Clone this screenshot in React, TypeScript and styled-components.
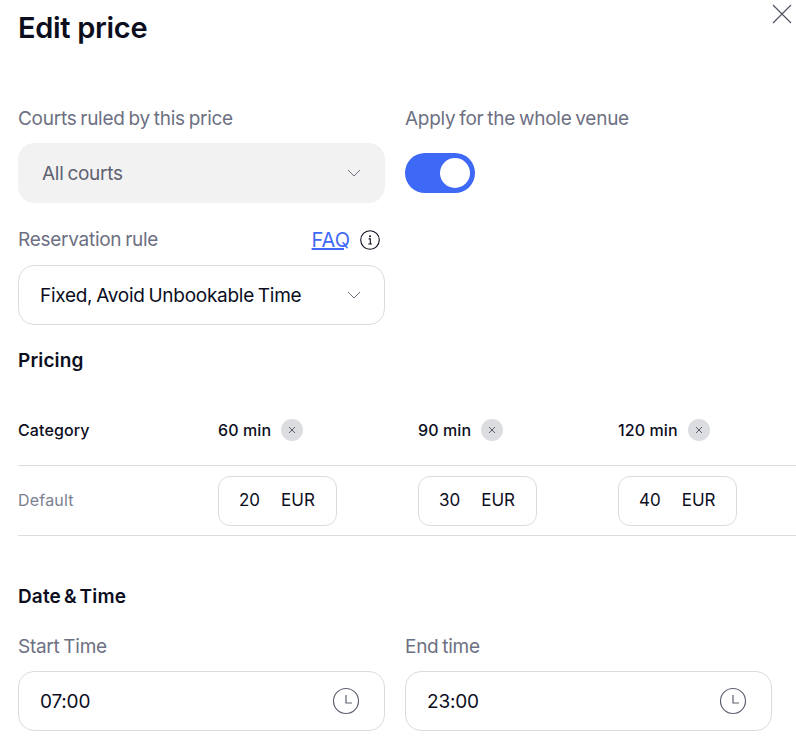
import type { FC } from 'react';
import styled, { createGlobalStyle } from 'styled-components';

const GlobalStyle = createGlobalStyle`
  html, body {
    margin: 0;
    padding: 0;
    background: #fff;
    overflow: hidden;
  }
  body {
    font-family: Inter, 'Liberation Sans', sans-serif;
    color: #0c0e1e;
  }
`;

const durations = [
  { label: '60 min', price: 20 },
  { label: '90 min', price: 30 },
  { label: '120 min', price: 40 },
];

const Chevron: FC = () => (
  <svg width='14' height='8' viewBox='0 0 14 8' fill='none'>
    <path d='M1 1l6 6 6-6' stroke='#6f7280' strokeWidth='1' />
  </svg>
);

const ClockIcon: FC = () => (
  <svg width='28' height='28' viewBox='0 0 28 28' fill='none'>
    <circle cx='14' cy='14' r='12.5' stroke='#5f6272' strokeWidth='1.2' />
    <path d='M14 8v8h6' stroke='#5f6272' strokeWidth='1.2' />
  </svg>
);

const App: FC = () => (
  <Page>
    <GlobalStyle />
    <CloseButton aria-label='Close'>
      <svg width='20' height='20' viewBox='0 0 20 20' fill='none'>
        <path d='M1 1l18 18M19 1L1 19' stroke='#4c4f5e' strokeWidth='1.1' />
      </svg>
    </CloseButton>
    <Title>Edit price</Title>

    <TwoColumns $top={61}>
      <Field>
        <Label>Courts ruled by this price</Label>
        <Select $disabled>
          All courts
          <Chevron />
        </Select>
      </Field>
      <Field>
        <Label>Apply for the whole venue</Label>
        <Toggle>
          <Knob />
        </Toggle>
      </Field>
    </TwoColumns>

    <TwoColumns $top={23}>
      <Field>
        <LabelRow>
          <Label>Reservation rule</Label>
          <FaqLink href='#faq'>FAQ</FaqLink>
          <svg width='20' height='20' viewBox='0 0 20 20' fill='none'>
            <circle cx='10' cy='10' r='9.3' stroke='#0c0e1e' strokeWidth='1.1' />
            <path d='M8.6 8.9h1.7v5M8.3 14h3.6' stroke='#0c0e1e' strokeWidth='1.1' />
            <circle cx='10' cy='6.2' r='1' fill='#0c0e1e' />
          </svg>
        </LabelRow>
        <Select>
          Fixed, Avoid Unbookable Time
          <Chevron />
        </Select>
      </Field>
    </TwoColumns>

    <SectionTitle $top={24}>Pricing</SectionTitle>

    <PriceHead>
      <HeadCell>Category</HeadCell>
      {durations.map(({ label }) => (
        <HeadCell key={label}>
          {label}
          <RemoveChip aria-label={`Remove ${label}`}>
            <svg width='8' height='8' viewBox='0 0 8 8' fill='none'>
              <path d='M1 1l6 6M7 1L1 7' stroke='#5a5d6c' strokeWidth='1' />
            </svg>
          </RemoveChip>
        </HeadCell>
      ))}
    </PriceHead>

    <PriceRow>
      <RowName>Default</RowName>
      {durations.map(({ label, price }) => (
        <div key={label}>
          <PriceBox>
            <span>{price}</span>
            <span>EUR</span>
          </PriceBox>
        </div>
      ))}
    </PriceRow>

    <SectionTitle $top={49}>Date &amp; Time</SectionTitle>

    <TwoColumns $top={25}>
      <Field>
        <Label>Start Time</Label>
        <TimeBox>
          07:00
          <ClockIcon />
        </TimeBox>
      </Field>
      <Field>
        <Label>End time</Label>
        <TimeBox>
          23:00
          <ClockIcon />
        </TimeBox>
      </Field>
    </TwoColumns>
  </Page>
);

export default App;

const Page = styled.div`
  position: relative;
  width: 796px;
  height: 741px;
  box-sizing: border-box;
  padding: 11px 0 0 18px;
  overflow: hidden;
`;

const CloseButton = styled.button`
  position: absolute;
  top: 4px;
  right: 4px;
  width: 20px;
  height: 20px;
  padding: 0;
  border: 0;
  background: none;
`;

const Title = styled.h1`
  margin: 0;
  font-size: 29px;
  line-height: 34px;
  font-weight: 600;
  letter-spacing: -0.3px;
`;

const TwoColumns = styled.div<{ $top: number }>`
  display: grid;
  grid-template-columns: 367px 367px;
  gap: 20px;
  margin-top: ${({ $top }) => $top}px;
`;

const Field = styled.div`
  display: flex;
  flex-direction: column;
  align-items: flex-start;
  gap: 12px;
`;

const Label = styled.label`
  display: block;
  font-size: 19px;
  line-height: 25px;
  color: #6d7082;
  letter-spacing: -0.27px;
  word-spacing: -1.2px;
`;

const LabelRow = styled.div`
  display: flex;
  align-items: center;
  width: 100%;
  height: 27px;
  gap: 10px;
  padding-right: 5px;
  box-sizing: border-box;
  & > label {
    margin-right: auto;
  }
`;

const FaqLink = styled.a`
  font-size: 20px;
  line-height: 26px;
  color: #3e68f6;
`;

const Select = styled.div<{ $disabled?: boolean }>`
  display: flex;
  align-items: center;
  justify-content: space-between;
  width: 100%;
  height: 60px;
  box-sizing: border-box;
  padding: 0 23px 0 ${({ $disabled }) => ($disabled ? 23 : 21)}px;
  border-radius: 16px;
  border: 1px solid ${({ $disabled }) => ($disabled ? '#f2f2f2' : '#dcdcdf')};
  background: ${({ $disabled }) => ($disabled ? '#f2f2f2' : '#fff')};
  color: ${({ $disabled }) => ($disabled ? '#5e6170' : '#0c0e1e')};
  font-size: 19px;
  letter-spacing: -0.27px;
  word-spacing: -1.2px;
`;

const Toggle = styled.div`
  display: flex;
  align-items: center;
  justify-content: flex-end;
  width: 70px;
  height: 40px;
  margin-top: 10px;
  padding: 0 5px;
  box-sizing: border-box;
  border-radius: 20px;
  background: #3e68f6;
`;

const Knob = styled.span`
  width: 30px;
  height: 30px;
  border-radius: 50%;
  background: #fff;
`;

const SectionTitle = styled.h2<{ $top: number }>`
  margin: ${({ $top }) => $top}px 0 0;
  font-size: 19px;
  line-height: 24px;
  font-weight: 600;
  letter-spacing: 0.15px;
  word-spacing: -2px;
`;

const PriceHead = styled.div`
  display: grid;
  grid-template-columns: repeat(4, 200px);
  align-items: center;
  height: 70px;
  margin-top: 22px;
  border-bottom: 1px solid #dcdcdf;
`;

const HeadCell = styled.div`
  display: flex;
  align-items: center;
  gap: 10px;
  font-size: 16px;
  font-weight: 500;
  letter-spacing: 0.1px;
`;

const RemoveChip = styled.button`
  display: flex;
  align-items: center;
  justify-content: center;
  width: 22px;
  height: 22px;
  padding: 0;
  border: 0;
  border-radius: 50%;
  background: #dcdde1;
`;

const PriceRow = styled.div`
  display: grid;
  grid-template-columns: repeat(4, 200px);
  align-items: center;
  height: 69px;
  border-bottom: 1px solid #dcdcdf;
`;

const RowName = styled.div`
  padding-bottom: 2px;
  font-size: 16px;
  letter-spacing: 0.2px;
  color: #7b7e8e;
`;

const PriceBox = styled.div`
  display: flex;
  align-items: center;
  gap: 21px;
  width: 119px;
  height: 50px;
  box-sizing: border-box;
  padding-left: 20px;
  padding-bottom: 2px;
  border: 1px solid #dcdcdf;
  border-radius: 12px;
  font-size: 17px;
`;

const TimeBox = styled.div`
  display: flex;
  align-items: center;
  justify-content: space-between;
  width: 100%;
  height: 60px;
  box-sizing: border-box;
  padding: 0 24px 0 21px;
  border: 1px solid #dcdcdf;
  border-radius: 16px;
  font-size: 19px;
  letter-spacing: -0.2px;
`;
